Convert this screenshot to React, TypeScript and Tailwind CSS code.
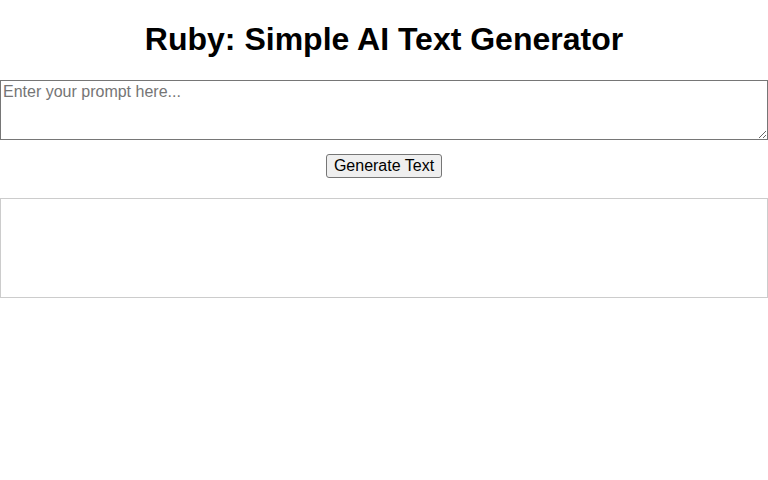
export default function App() {
  return (
    <div className="bg-white min-h-[480px] text-black" style={{ fontFamily: '"Liberation Sans", Arial, sans-serif' }}>
      <h1 className="text-[32px] font-bold text-center leading-[37px] pt-[21px] mb-[22px]">Ruby: Simple AI Text Generator</h1>
      <textarea
        className="block w-full h-[60px] border border-[#767676] p-[2px] text-[16px] leading-[18px] placeholder:text-[#757575] resize-y"
        placeholder="Enter your prompt here..."
      />
      <div className="flex justify-center mt-[14px]">
        <button className="text-[16px] leading-[18px] px-[7px] py-[2px] border border-[#767676] bg-[#efefef] rounded-[3px] text-black">
          Generate Text
        </button>
      </div>
      <div className="mt-[20px] h-[100px] border border-[#cccccc]"></div>
    </div>
  );
}
